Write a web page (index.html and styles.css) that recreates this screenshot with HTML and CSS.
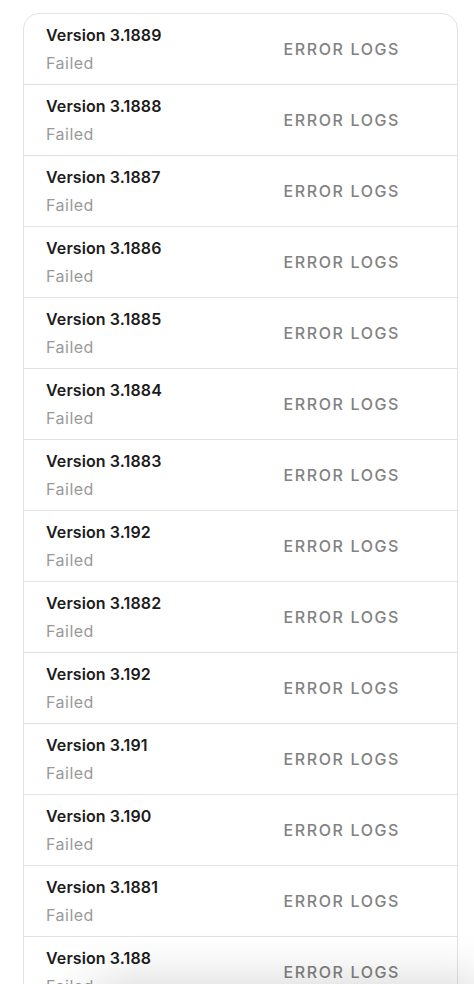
FILE: index.html
```html
<!DOCTYPE html>
<html>
<head>
<meta charset="utf-8">
<link rel="stylesheet" href="styles.css">
</head>
<body>
<div class="page">
  <ul class="card">
    <li class="row"><div class="info"><div class="title">Version 3.1889</div><div class="status">Failed</div></div><span class="action">ERROR LOGS</span></li>
    <li class="row"><div class="info"><div class="title">Version 3.1888</div><div class="status">Failed</div></div><span class="action">ERROR LOGS</span></li>
    <li class="row"><div class="info"><div class="title">Version 3.1887</div><div class="status">Failed</div></div><span class="action">ERROR LOGS</span></li>
    <li class="row"><div class="info"><div class="title">Version 3.1886</div><div class="status">Failed</div></div><span class="action">ERROR LOGS</span></li>
    <li class="row"><div class="info"><div class="title">Version 3.1885</div><div class="status">Failed</div></div><span class="action">ERROR LOGS</span></li>
    <li class="row"><div class="info"><div class="title">Version 3.1884</div><div class="status">Failed</div></div><span class="action">ERROR LOGS</span></li>
    <li class="row"><div class="info"><div class="title">Version 3.1883</div><div class="status">Failed</div></div><span class="action">ERROR LOGS</span></li>
    <li class="row"><div class="info"><div class="title">Version 3.192</div><div class="status">Failed</div></div><span class="action">ERROR LOGS</span></li>
    <li class="row"><div class="info"><div class="title">Version 3.1882</div><div class="status">Failed</div></div><span class="action">ERROR LOGS</span></li>
    <li class="row"><div class="info"><div class="title">Version 3.192</div><div class="status">Failed</div></div><span class="action">ERROR LOGS</span></li>
    <li class="row"><div class="info"><div class="title">Version 3.191</div><div class="status">Failed</div></div><span class="action">ERROR LOGS</span></li>
    <li class="row"><div class="info"><div class="title">Version 3.190</div><div class="status">Failed</div></div><span class="action">ERROR LOGS</span></li>
    <li class="row"><div class="info"><div class="title">Version 3.1881</div><div class="status">Failed</div></div><span class="action">ERROR LOGS</span></li>
    <li class="row"><div class="info"><div class="title">Version 3.188</div><div class="status">Failed</div></div><span class="action">ERROR LOGS</span></li>
  </ul>
</div>
<div class="sheet-shadow"></div>
</body>
</html>
```

FILE: styles.css
```css
html, body {
  margin: 0;
  padding: 0;
  background: #ffffff;
  height: 984px;
  overflow: hidden;
}
body {
  font-family: "Inter", "Liberation Sans", sans-serif;
  position: relative;
}
.page {
  padding: 13px 16px 0 23px;
}
.card {
  list-style: none;
  margin: 0;
  padding: 0;
  border: 1px solid #e2e2e2;
  border-radius: 16px;
  background: #fff;
}
.row {
  display: flex;
  align-items: center;
  justify-content: space-between;
  padding: 7px 0 7px 22px;
  border-bottom: 1px solid #e2e2e2;
}
.title {
  font-size: 16px;
  font-weight: 600;
  line-height: 28px;
  color: #1c1c1c;
  letter-spacing: 0.1px;
}
.status {
  font-size: 16px;
  line-height: 28px;
  color: #999999;
  letter-spacing: 0.5px;
}
.action {
  font-size: 16px;
  font-weight: 500;
  letter-spacing: 1.6px;
  color: #828282;
  padding-right: 57px;
}
.sheet-shadow {
  position: absolute;
  left: 90px;
  right: 0;
  top: 990px;
  height: 60px;
  border-radius: 40px 0 0 0;
  background: #fff;
  box-shadow: 0 0 50px 10px rgba(0,0,0,0.16);
}
```
